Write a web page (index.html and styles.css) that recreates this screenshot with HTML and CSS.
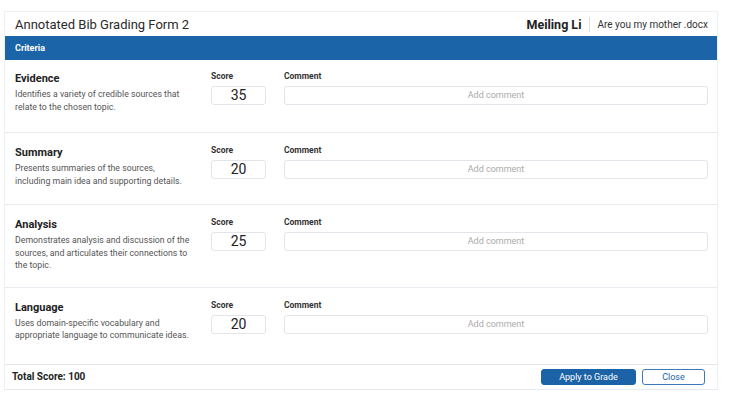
FILE: index.html
```html
<!DOCTYPE html>
<html lang="en">
<head>
<meta charset="utf-8">
<title>Annotated Bib Grading Form 2</title>
<link rel="stylesheet" href="styles.css">
</head>
<body>
<div class="panel">
  <header class="head">
    <h1 class="title">Annotated Bib Grading Form 2</h1>
    <div class="meta">
      <span class="student">Meiling Li</span>
      <span class="sep"></span>
      <span class="file">Are you my mother .docx</span>
    </div>
  </header>
  <div class="bar">Criteria</div>

  <section class="row row-first">
    <div class="crit">
      <h2 class="crit-name">Evidence</h2>
      <p class="crit-desc">Identifies a variety of credible sources that relate to the chosen topic.</p>
    </div>
    <div class="score">
      <div class="label">Score</div>
      <div class="score-box">35</div>
    </div>
    <div class="comment">
      <div class="label">Comment</div>
      <div class="comment-box">Add comment</div>
    </div>
  </section>

  <section class="row">
    <div class="crit">
      <h2 class="crit-name">Summary</h2>
      <p class="crit-desc">Presents summaries of the sources, including main idea and supporting details.</p>
    </div>
    <div class="score">
      <div class="label">Score</div>
      <div class="score-box">20</div>
    </div>
    <div class="comment">
      <div class="label">Comment</div>
      <div class="comment-box">Add comment</div>
    </div>
  </section>

  <section class="row row-three">
    <div class="crit">
      <h2 class="crit-name">Analysis</h2>
      <p class="crit-desc">Demonstrates analysis and discussion of the sources, and articulates their connections to the topic.</p>
    </div>
    <div class="score">
      <div class="label">Score</div>
      <div class="score-box">25</div>
    </div>
    <div class="comment">
      <div class="label">Comment</div>
      <div class="comment-box">Add comment</div>
    </div>
  </section>

  <section class="row row-last">
    <div class="crit">
      <h2 class="crit-name">Language</h2>
      <p class="crit-desc">Uses domain-specific vocabulary and appropriate language to communicate ideas.</p>
    </div>
    <div class="score">
      <div class="label">Score</div>
      <div class="score-box">20</div>
    </div>
    <div class="comment">
      <div class="label">Comment</div>
      <div class="comment-box">Add comment</div>
    </div>
  </section>

  <footer class="foot">
    <div class="total">Total Score: 100</div>
    <div class="actions">
      <button class="btn btn-primary">Apply to Grade</button>
      <button class="btn btn-secondary">Close</button>
    </div>
  </footer>
</div>
</body>
</html>
```

FILE: styles.css
```css
* { box-sizing: border-box; }
html, body { margin: 0; padding: 0; background: #ffffff; }
body {
  font-family: Roboto, "Liberation Sans", Arial, sans-serif;
  color: #222;
}
.panel {
  margin: 11px 0 0 4px;
  width: 714px;
  border: 1px solid #edf1f6;
  border-bottom-color: #e6ebf2;
}
.head {
  height: 24px;
  display: flex;
  align-items: center;
  justify-content: space-between;
  padding: 0 9px 0 10px;
}
.title {
  margin: 0;
  font-size: 13px;
  font-weight: 400;
  color: #2a2a2a;
}
.meta {
  display: flex;
  align-items: center;
}
.student {
  font-size: 12.5px;
  font-weight: 700;
  color: #222;
}
.sep {
  width: 1px;
  height: 15px;
  background: #dcdfe4;
  margin: 0 7px 0 8px;
}
.file {
  font-size: 10px;
  color: #333;
}
.bar {
  height: 24px;
  background: #1b64a8;
  color: #fff;
  font-size: 9px;
  font-weight: 700;
  display: flex;
  align-items: center;
  padding-left: 10px;
}
.row {
  display: flex;
  padding: 11px 9px 17px 10px;
  border-top: 1px solid #e8ebef;
}
.row-first { border-top: none; padding-top: 10px; padding-bottom: 19px; }
.row-three { padding-bottom: 15px; }
.row-last { padding-bottom: 22px; }
.crit {
  width: 196px;
  padding-top: 2px;
  padding-right: 21px;
}
.crit-name {
  margin: 0 0 2px;
  font-size: 11px;
  line-height: 14px;
  font-weight: 700;
  color: #222;
}
.crit-desc {
  margin: 0;
  font-size: 8.75px;
  line-height: 12.5px;
  color: #555;
}
.score {
  width: 55px;
  margin-right: 18px;
}
.label {
  font-size: 8.5px;
  line-height: 12px;
  font-weight: 700;
  color: #333;
  margin-bottom: 4px;
}
.score-box {
  height: 19px;
  border: 1px solid #e2e5e9;
  border-radius: 3px;
  font-size: 14px;
  line-height: 17px;
  text-align: center;
  color: #222;
}
.comment { flex: 1; }
.comment-box {
  height: 19px;
  border: 1px solid #e2e5e9;
  border-radius: 3px;
  font-size: 9px;
  line-height: 17px;
  text-align: center;
  color: #aaa;
}
.foot {
  height: 25px;
  border-top: 1px solid #e3e7ec;
  display: flex;
  align-items: center;
  justify-content: space-between;
  padding: 0 12px 0 7px;
}
.total {
  font-size: 10px;
  font-weight: 700;
  color: #222;
}
.actions { display: flex; gap: 6px; }
.btn {
  height: 16px;
  border-radius: 3px;
  font-family: Roboto, "Liberation Sans", Arial, sans-serif;
  font-size: 9px;
  padding: 0;
  line-height: 14px;
}
.btn-primary {
  width: 95px;
  background: #1b62a6;
  border: 1px solid #1b62a6;
  color: #fff;
}
.btn-secondary {
  width: 63px;
  background: #fff;
  border: 1px solid #3c78b8;
  color: #1b62a6;
}
```
